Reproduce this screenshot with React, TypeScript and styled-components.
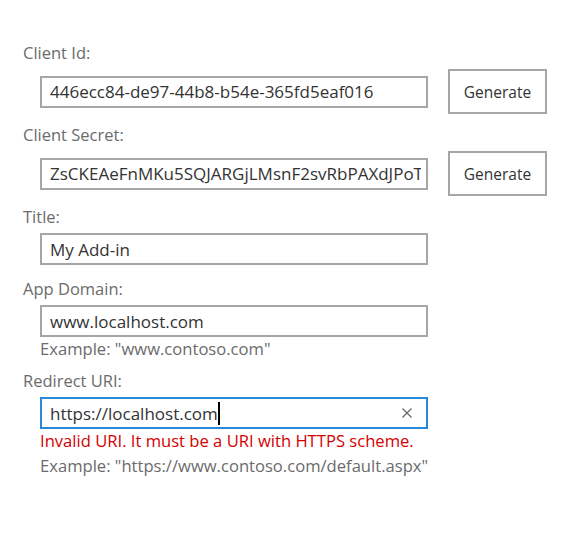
import React from "react";
import styled, { createGlobalStyle } from "styled-components";

const Global = createGlobalStyle`
  html, body {
    margin: 0;
    padding: 0;
    background: #ffffff;
  }
  body {
    font-family: "Open Sans", "Noto Sans", "Liberation Sans", sans-serif;
  }
  * { box-sizing: border-box; }
`;

const Page = styled.div`
  padding: 42px 0 40px 23px;
  width: 572px;
`;

const Field = styled.div<{ $mb: number }>`
  margin-bottom: ${(p) => p.$mb}px;
`;

const Label = styled.div`
  font-size: 16.5px;
  line-height: 22px;
  color: #6b6b6b;
  margin-bottom: 5px;
`;

const Body = styled.div`
  padding-left: 17px;
`;

const Row = styled.div`
  display: flex;
  align-items: center;
  gap: 20px;
`;

const TextBox = styled.input`
  display: block;
  width: 388px;
  height: 32px;
  margin: 0;
  border: 2px solid #a6a6a6;
  border-radius: 0;
  padding: 0 5px 0 8px;
  font-family: "Open Sans", "Noto Sans", "Liberation Sans", sans-serif;
  font-size: 17px;
  color: #333333;
  background: #ffffff;
  outline: none;
`;

const FocusedBox = styled.div`
  display: flex;
  align-items: center;
  width: 388px;
  height: 32px;
  border: 2px solid #2b88d8;
  padding: 0 14px 0 8px;
  font-size: 17px;
  color: #333333;
  background: #ffffff;
`;

const BoxText = styled.span`
  white-space: nowrap;
`;

const Caret = styled.span`
  display: inline-block;
  width: 2px;
  height: 23px;
  background: #000000;
`;

const Spacer = styled.span`
  flex: 1;
`;

const ClearIcon = styled.svg`
  width: 10px;
  height: 10px;
  display: block;
`;

const GenerateButton = styled.button`
  width: 99px;
  height: 45px;
  border: 2px solid #a6a6a6;
  border-radius: 0;
  background: #ffffff;
  color: #333333;
  font-family: "Open Sans", "Noto Sans", "Liberation Sans", sans-serif;
  font-size: 15.5px;
  padding: 0;
  cursor: pointer;
`;

const Message = styled.div<{ $error?: boolean; $mt: number }>`
  font-size: 16.6px;
  line-height: 22px;
  margin-top: ${(p) => p.$mt}px;
  color: ${(p) => (p.$error ? "#d40000" : "#6b6b6b")};
  white-space: nowrap;
`;

export default function App() {
  return (
    <>
      <Global />
      <Page>
        <Field $mb={10}>
          <Label>Client Id:</Label>
          <Body>
            <Row>
              <TextBox readOnly value="446ecc84-de97-44b8-b54e-365fd5eaf016" />
              <GenerateButton>Generate</GenerateButton>
            </Row>
          </Body>
        </Field>
        <Field $mb={10}>
          <Label>Client Secret:</Label>
          <Body>
            <Row>
              <TextBox
                readOnly
                value="ZsCKEAeFnMKu5SQJARGjLMsnF2svRbPAXdJPoTq7wX1="
              />
              <GenerateButton>Generate</GenerateButton>
            </Row>
          </Body>
        </Field>
        <Field $mb={13}>
          <Label>Title:</Label>
          <Body>
            <TextBox readOnly value="My Add-in" />
          </Body>
        </Field>
        <Field $mb={10}>
          <Label>App Domain:</Label>
          <Body>
            <TextBox readOnly value="www.localhost.com" />
            <Message $mt={1}>Example: "www.contoso.com"</Message>
          </Body>
        </Field>
        <Field $mb={10}>
          <Label>Redirect URI:</Label>
          <Body>
            <FocusedBox>
              <BoxText>https://localhost.com</BoxText>
              <Caret />
              <Spacer />
              <ClearIcon viewBox="0 0 10 10">
                <path
                  d="M0.5 0.5 L9.5 9.5 M9.5 0.5 L0.5 9.5"
                  stroke="#666666"
                  strokeWidth="1.2"
                  fill="none"
                />
              </ClearIcon>
            </FocusedBox>
            <Message $error $mt={1}>
              Invalid URI. It must be a URI with HTTPS scheme.
            </Message>
            <Message $mt={3}>
              Example: "https://www.contoso.com/default.aspx"
            </Message>
          </Body>
        </Field>
      </Page>
    </>
  );
}
